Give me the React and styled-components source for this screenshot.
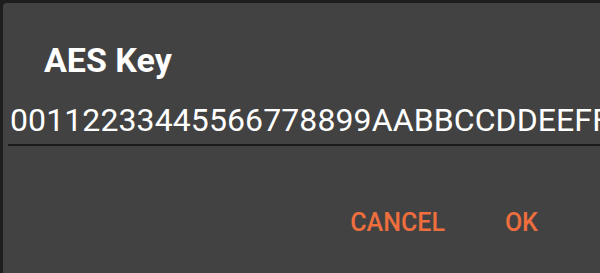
import { createGlobalStyle } from "styled-components"
import styled from "styled-components"

const Global = createGlobalStyle`
    html, body {
        margin: 0;
        padding: 0;
        background-color: #1e1e1e;
        font-family: Roboto, 'Liberation Sans', sans-serif;
    }
`

const Screen = styled.div`
    width: 600px;
    height: 273px;
    box-sizing: border-box;
    padding: 3px 2px 0 3px;
    display: flex;
`

const Dialog = styled.div`
    flex: 1;
    background-color: #424242;
    border-radius: 4px 4px 0 0;
    display: flex;
    flex-direction: column;
`

const Title = styled.div`
    padding: 37px 0 0 41px;
    height: 48px;
    font-size: 34px;
    font-weight: 700;
    color: #ffffff;
    line-height: 40px;
`

const Field = styled.div`
    margin: 13px 3px 0 5px;
    border-bottom: 2px solid #1b1b1b;
`

const Clip = styled.div`
    margin-right: 6px;
    overflow: hidden;
`

const Input = styled.div`
    padding: 0 0 5px 2px;
    font-size: 32px;
    letter-spacing: 0.1px;
    line-height: 38px;
    color: #ffffff;
    white-space: nowrap;
`

const Actions = styled.div`
    display: flex;
    justify-content: flex-end;
    gap: 60px;
    padding: 63px 81px 0 0;
`

const Action = styled.div`
    font-size: 25px;
    font-weight: 500;
    color: ${p => p.color || "#ee6e3e"};
    line-height: 28px;
`

export default function App() {
    return (
        <Screen>
            <Global />
            <Dialog>
                <Title>AES Key</Title>
                <Field>
                    <Clip>
                        <Input>00112233445566778899AABBCCDDEEFF</Input>
                    </Clip>
                </Field>
                <Actions>
                    <Action>CANCEL</Action>
                    <Action>OK</Action>
                </Actions>
            </Dialog>
        </Screen>
    )
}
